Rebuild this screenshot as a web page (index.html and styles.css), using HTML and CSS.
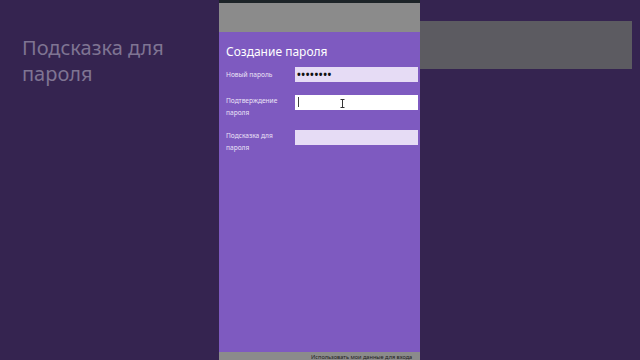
FILE: index.html
```
<!DOCTYPE html>
<html lang="ru">
<head>
<meta charset="UTF-8">
<title>Создание пароля</title>
<link rel="stylesheet" href="styles.css">
</head>
<body>
<div class="screen">
    <div class="side-left">
        <p class="hint-big">Подсказка для<br>пароля</p>
    </div>

    <div class="panel">
        <div class="panel-top"></div>
        <div class="panel-bar"></div>
        <div class="panel-body">
            <h2 class="title">Создание пароля</h2>
            <div class="row row-first">
                <label class="label">Новый пароль</label>
                <div class="field dots">••••••••</div>
            </div>
            <div class="row row-second">
                <label class="label">Подтверждение<br>пароля</label>
                <div class="field field-focus">
                    <span class="caret"></span>
                    <svg class="ibeam" width="5" height="9" viewBox="0 0 5 9">
                        <path d="M0.5 0.5h4M2.5 0.5v8M0.5 8.5h4" stroke="#333" stroke-width="1" fill="none"/>
                    </svg>
                </div>
            </div>
            <div class="row">
                <label class="label">Подсказка для<br>пароля</label>
                <div class="field"></div>
            </div>
        </div>
        <div class="panel-foot">
            <span>Использовать мои данные для входа</span>
        </div>
    </div>

    <div class="side-right">
        <div class="ghost-box"></div>
    </div>
</div>
</body>
</html>
```

FILE: styles.css
```
body {
    margin: 0;
    background: #352450;
    font-family: "Noto Sans", "Open Sans", sans-serif;
}
.screen {
    display: flex;
    width: 640px;
    height: 360px;
    overflow: hidden;
}
.side-left {
    width: 219px;
    flex-shrink: 0;
}
.hint-big {
    margin: 35px 0 0 22px;
    font-size: 20px;
    line-height: 26px;
    color: #7f7493;
    font-weight: 400;
}
.panel {
    width: 201px;
    flex-shrink: 0;
    display: flex;
    flex-direction: column;
}
.panel-top {
    height: 3px;
    background: #1d2428;
}
.panel-bar {
    height: 29px;
    background: #8b8b8b;
}
.panel-body {
    flex: 1;
    background: #7e5ac0;
    padding: 0 2px 0 7px;
}
.title {
    margin: 11px 0 0 0;
    font-size: 12px;
    line-height: 18px;
    font-weight: 400;
    color: #ffffff;
}
.row {
    display: flex;
    align-items: flex-start;
}
.row-first {
    margin-top: 6px;
    margin-bottom: 13px;
}
.row-first .label {
    padding-top: 2px;
}
.row-second {
    margin-bottom: 11px;
}
.label {
    width: 69px;
    flex-shrink: 0;
    font-size: 6.6px;
    line-height: 12px;
    color: #ebe3f7;
}
.field {
    position: relative;
    width: 123px;
    height: 15px;
    background: #e6dcf5;
    padding-left: 2px;
    box-sizing: border-box;
    color: #111;
}
.dots {
    font-size: 10px;
    line-height: 15px;
    font-weight: 700;
    letter-spacing: 0.6px;
}
.field-focus {
    background: #ffffff;
}
.caret {
    position: absolute;
    left: 3px;
    top: 2px;
    width: 1px;
    height: 10px;
    background: #444;
}
.ibeam {
    position: absolute;
    left: 45px;
    top: 4px;
}
.panel-foot {
    height: 8px;
    background: #8b8b8b;
    overflow: hidden;
    white-space: nowrap;
    padding-left: 92px;
    font-size: 5.6px;
    line-height: 10px;
    color: #222;
}
.side-right {
    flex: 1;
    padding-top: 21px;
}
.ghost-box {
    width: 212px;
    height: 48px;
    background: #5c5b61;
}
```
